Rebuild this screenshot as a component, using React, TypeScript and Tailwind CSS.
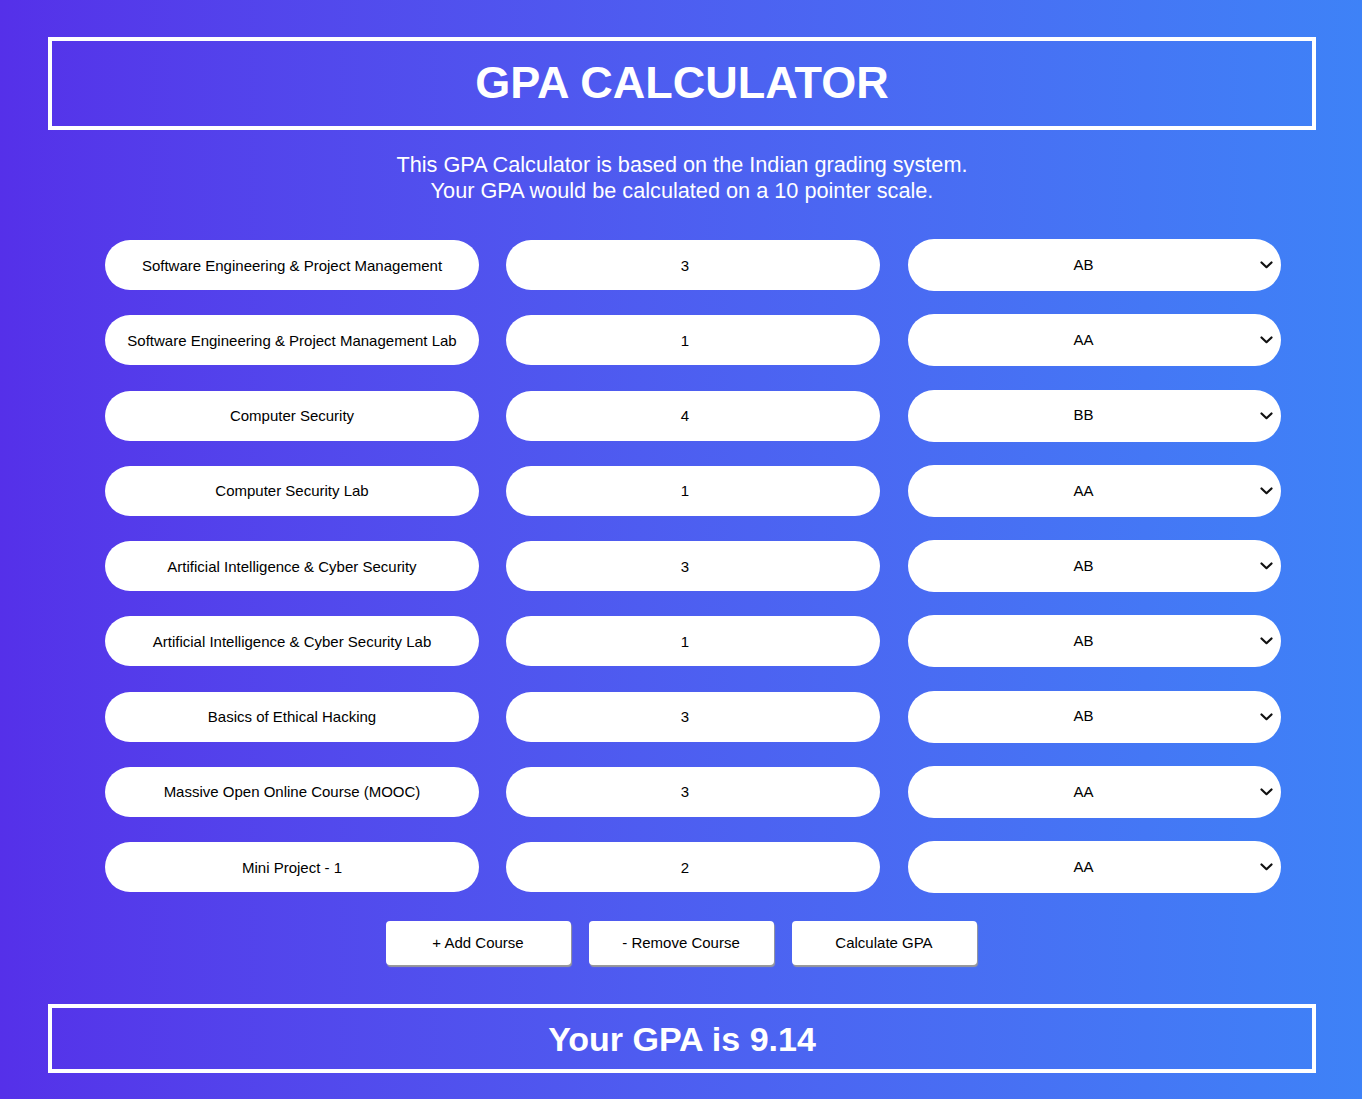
import React, { useState } from 'react'

type Course = { name: string; credits: string; grade: string }

const gradePoints: Record<string, number> = { AA: 10, AB: 9, BB: 8, BC: 7, CC: 6, CD: 5, DD: 4, FF: 0 }

const initialCourses: Course[] = [
    { name: 'Software Engineering & Project Management', credits: '3', grade: 'AB' },
    { name: 'Software Engineering & Project Management Lab', credits: '1', grade: 'AA' },
    { name: 'Computer Security', credits: '4', grade: 'BB' },
    { name: 'Computer Security Lab', credits: '1', grade: 'AA' },
    { name: 'Artificial Intelligence & Cyber Security', credits: '3', grade: 'AB' },
    { name: 'Artificial Intelligence & Cyber Security Lab', credits: '1', grade: 'AB' },
    { name: 'Basics of Ethical Hacking', credits: '3', grade: 'AB' },
    { name: 'Massive Open Online Course (MOOC)', credits: '3', grade: 'AA' },
    { name: 'Mini Project - 1', credits: '2', grade: 'AA' },
]

const calc = (courses: Course[]) => {
    let total = 0
    let credits = 0
    courses.forEach(c => {
        const cr = Number(c.credits) || 0
        total += cr * (gradePoints[c.grade] ?? 0)
        credits += cr
    })
    return credits ? (total / credits).toFixed(2) : '0.00'
}

const Chevron = () => (
    <svg className='pointer-events-none absolute right-[8px] top-1/2 -translate-y-1/2' width='13' height='8' viewBox='0 0 13 8' fill='none'>
        <path d='M1.5 1.5 L6.5 6.2 L11.5 1.5' stroke='#111' strokeWidth='2.2' strokeLinecap='round' strokeLinejoin='round' />
    </svg>
)

const App: React.FC = () => {
    const [courses, setCourses] = useState<Course[]>(initialCourses)
    const [gpa, setGpa] = useState(calc(initialCourses))

    const update = (i: number, key: keyof Course, value: string) => {
        setCourses(prev => prev.map((c, idx) => (idx === i ? { ...c, [key]: value } : c)))
    }

    const inputClass = 'h-[50px] w-[374px] rounded-[25px] bg-white text-center text-[15px] text-black outline-none'
    const buttonClass = 'h-[44px] w-[185px] rounded-[4px] bg-white text-[15px] text-black shadow-[1px_2px_1px_#9a9a9a]'

  return (
    <div className='min-h-screen w-full bg-linear-to-r from-[#5530e9] to-[#3e82f7] pt-[37px] pb-[26px] font-["Liberation_Sans",Arial,sans-serif]'>
        <div className='mx-[48px] w-[1268px]'>
            <div className='flex h-[93px] items-center justify-center border-4 border-white pb-[3px]'>
                <h1 className='text-[45px] font-bold leading-none text-white'>GPA CALCULATOR</h1>
            </div>

            <p className='mt-[22px] text-center text-[21.7px] leading-[26px] text-white'>
                This GPA Calculator is based on the Indian grading system.
                <br />
                Your GPA would be calculated on a 10 pointer scale.
            </p>

            <div className='mt-[35px] flex flex-col gap-y-[23.25px] pl-[57px] pr-[35px]'>
                {courses.map((c, i) => (
                    <div key={i} className='flex h-[52px] items-center'>
                        <input type='text' value={c.name} onChange={(e) => update(i, 'name', e.target.value)} className={inputClass} />
                        <input type='text' value={c.credits} onChange={(e) => update(i, 'credits', e.target.value)} className={`${inputClass} ml-[27px] pr-[16px]`} />
                        <div className='relative ml-[28px] h-[52px] w-[373px]'>
                            <select value={c.grade} onChange={(e) => update(i, 'grade', e.target.value)} className='h-full w-full appearance-none rounded-[26px] bg-white pr-[22px] text-center text-[15px] text-black outline-none'>
                                {Object.keys(gradePoints).map(g => (
                                    <option key={g} value={g}>{g}</option>
                                ))}
                            </select>
                            <Chevron />
                        </div>
                    </div>
                ))}
            </div>

            <div className='mt-[28px] flex justify-center gap-[18px] pr-[2px]'>
                <button onClick={() => setCourses(prev => [...prev, { name: '', credits: '', grade: 'AA' }])} className={buttonClass}>+ Add Course</button>
                <button onClick={() => setCourses(prev => prev.slice(0, -1))} className={buttonClass}>- Remove Course</button>
                <button onClick={() => setGpa(calc(courses))} className={buttonClass}>Calculate GPA</button>
            </div>

            <div className='mt-[39px] flex h-[69px] items-center justify-center border-4 border-white'>
                <p className='text-[34px] font-bold leading-none text-white'>Your GPA is {gpa}</p>
            </div>
        </div>
    </div>
  )
}

export default App
